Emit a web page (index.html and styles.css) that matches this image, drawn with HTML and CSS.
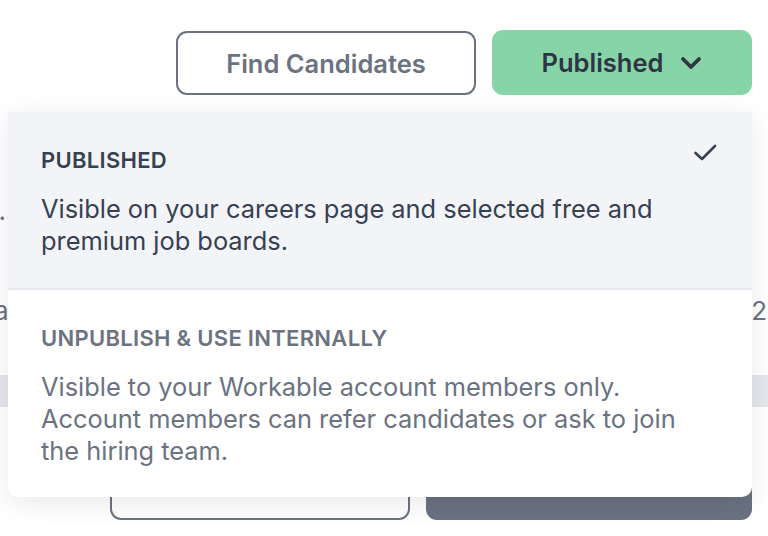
FILE: index.html
```html
<!DOCTYPE html>
<html lang="en">
<head>
  <meta charset="UTF-8">
  <meta name="viewport" content="width=device-width, initial-scale=1.0">
  <title>Job status</title>
  <link rel="stylesheet" href="styles.css">
</head>
<body>

  <div id="page">
    <div class="toolbar">
      <button class="btn btn-outline">Find Candidates</button>
      <button class="btn btn-green">
        Published
        <svg class="chevron" width="22" height="16" viewBox="0 0 22 16">
          <path d="M3 4 L11 12 L19 4" fill="none" stroke="#2d3642" stroke-width="3.8" stroke-linecap="round" stroke-linejoin="round"/>
        </svg>
      </button>
    </div>

    <div class="behind">
      <div class="behind-dots">…</div>
      <div class="behind-row">
        <span class="cut-left">a</span>
        <span>2</span>
      </div>
    </div>

    <div class="band"></div>

    <div class="footer">
      <button class="btn btn-outline">Find Candidates</button>
      <button class="btn btn-dark">Publish Job</button>
    </div>

    <div id="status-menu">
      <div class="option selected">
        <div class="option-head">
          <span class="option-title">PUBLISHED</span>
          <svg class="check" width="26" height="20" viewBox="0 0 26 20">
            <path d="M2.5 11 L9 17 L22 4" fill="none" stroke="#374151" stroke-width="2.6" stroke-linecap="round" stroke-linejoin="round"/>
          </svg>
        </div>
        <p class="option-text">Visible on your careers page and selected free and premium job boards.</p>
      </div>
      <div class="option">
        <div class="option-head">
          <span class="option-title">UNPUBLISH &amp; USE INTERNALLY</span>
        </div>
        <p class="option-text">Visible to your Workable account members only. Account members can refer candidates or ask to join the hiring team.</p>
      </div>
    </div>
  </div>

</body>
</html>
```

FILE: styles.css
```css
body {
  font-family: 'Inter', 'Liberation Sans', sans-serif;
  margin: 0;
  background-color: #fff;
  color: #374151;
}

#page {
  position: relative;
  width: 768px;
  height: 536px;
  overflow: hidden;
}

.toolbar {
  display: flex;
  justify-content: flex-end;
  gap: 16px;
  padding: 30px 16px 0 0;
  height: 66px;
}

.btn {
  font-family: inherit;
  font-size: 25.5px;
  font-weight: 600;
  border-radius: 11px;
  cursor: pointer;
  display: flex;
  align-items: center;
  justify-content: center;
  gap: 17px;
  height: 65px;
}

.btn-outline {
  width: 300px;
  background-color: #fff;
  border: 2px solid #6b7280;
  color: #6b7280;
}

.toolbar .btn-outline {
  margin-top: 1px;
  height: 64px;
}

.btn-green {
  width: 260px;
  background-color: #86d4a8;
  border: none;
  color: #2d3642;
}

.chevron {
  margin-top: 1px;
}

.behind {
  color: #6b7280;
  font-size: 26px;
  line-height: 32px;
  padding-top: 99px;
}

.behind-dots {
  margin-left: -9px;
}

.behind-row {
  display: flex;
  justify-content: space-between;
  margin-top: 68px;
  margin-right: 1px;
}

.cut-left {
  margin-left: -6px;
}

.band {
  margin-top: 48px;
  height: 32px;
  background-color: #e6e7ec;
}

.footer {
  display: flex;
  justify-content: flex-end;
  gap: 16px;
  padding: 48px 16px 0 0;
}

.btn-dark {
  width: 326px;
  background-color: #6a7180;
  border: none;
  color: #fff;
}

/* dropdown sits over the page */
#status-menu {
  position: absolute;
  top: 112px;
  left: 8px;
  width: 744px;
  background-color: #fff;
  border-radius: 0 0 10px 10px;
  box-shadow: 0 6px 28px rgba(0, 0, 0, 0.09);
  overflow: hidden;
}

.option {
  padding: 34px 33px 30px 33px;
  color: #6b7280;
}

.option.selected {
  background-color: #f3f4f8;
  color: #374151;
  border-bottom: 2px solid #e6e8f0;
  padding-bottom: 31px;
}

.option-head {
  display: flex;
  justify-content: space-between;
  align-items: flex-start;
  height: 28px;
}

.option-title {
  font-size: 22px;
  line-height: 28px;
  font-weight: 600;
  letter-spacing: 0.3px;
}

.check {
  margin-top: -4px;
}

.option-text {
  font-size: 25.4px;
  line-height: 32px;
  margin: 19px 0 0 0;
  max-width: 648px;
}
```
